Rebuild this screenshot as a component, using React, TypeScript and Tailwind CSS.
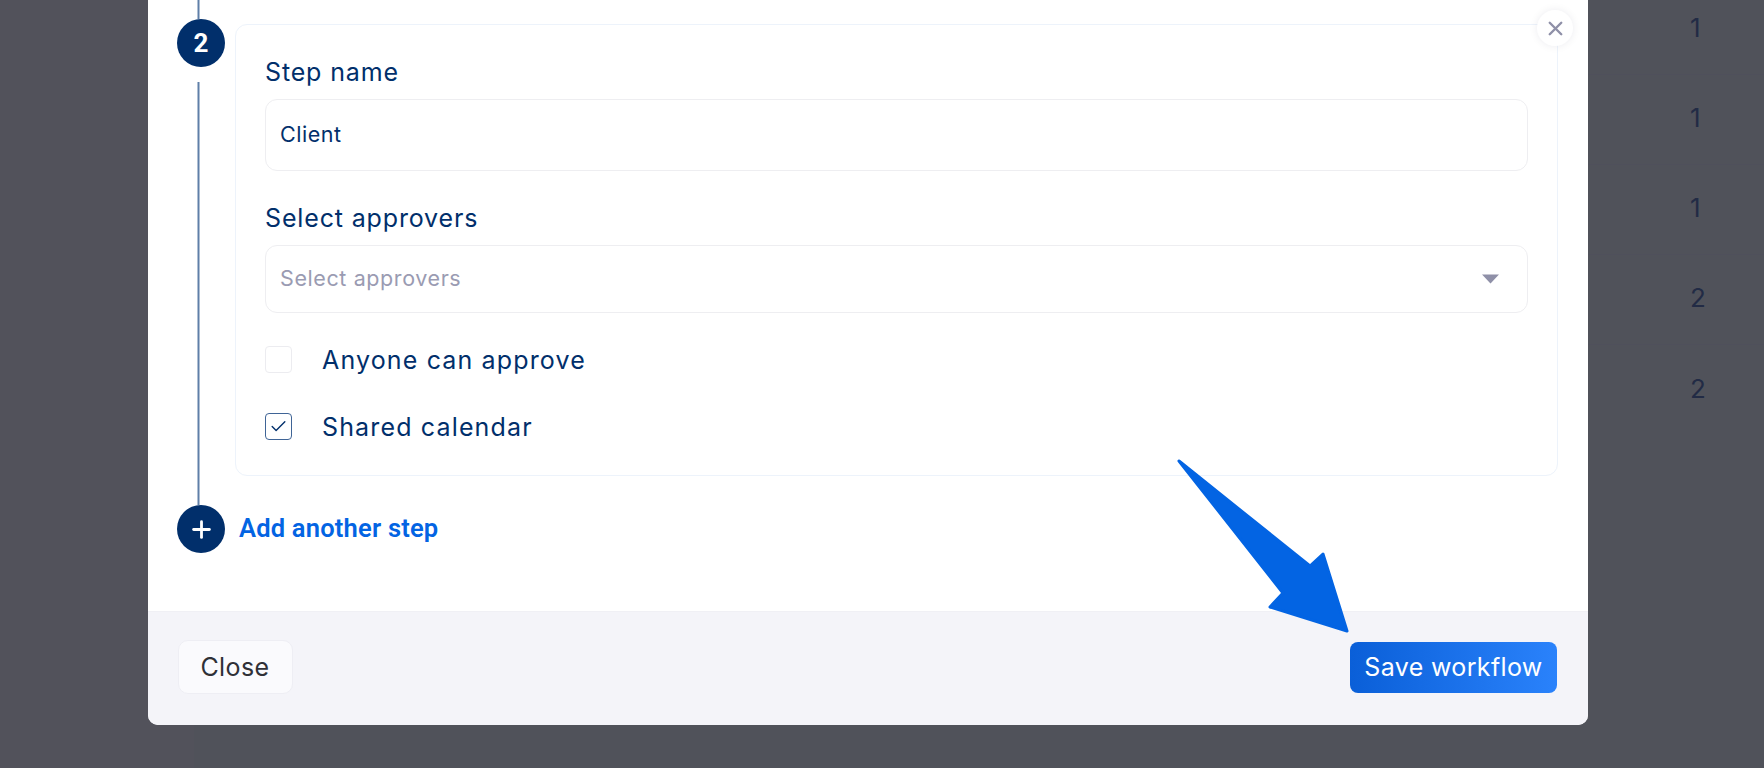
import { Check, Plus, X } from "lucide-react";

/** Row numbers of the table that sits behind the modal. */
function BackdropColumn() {
  return (
    <div className="-mt-[15px] flex w-[176px] shrink-0 flex-col self-start">
      {["1", "1", "1", "2", "2"].map((n, i) => (
        <div
          key={i}
          className="flex h-[90px] items-center border-b border-[#4f505b] pl-[102px] text-[26px] text-[#222b45] last:border-0"
        >
          <span className="-mt-1">{n}</span>
        </div>
      ))}
    </div>
  );
}

function FieldLabel({ children }: { children: string }) {
  return <div className="h-8 text-[25px] leading-8 tracking-[0.85px] text-[#012f6b]">{children}</div>;
}

function CheckRow({ label, checked }: { label: string; checked?: boolean }) {
  return (
    <div className="flex h-[27px] items-center gap-[30px]">
      <span
        className={
          checked
            ? "flex size-[27px] items-center justify-center rounded border border-[#3f6496] text-[#012f6b]"
            : "flex size-[27px] items-center justify-center rounded border border-[#ececf0]"
        }
      >
        {checked && <Check size={19} strokeWidth={1.75} />}
      </span>
      <span className="text-[25px] leading-8 tracking-[1.15px] text-[#012f6b]">{label}</span>
    </div>
  );
}

export default function App() {
  return (
    <div className="relative flex h-[768px] w-[1764px] items-start overflow-hidden bg-[linear-gradient(to_right,#52525b_194px,#50525a_194px)] font-['Inter',sans-serif]">
      <div className="w-[147.5px] shrink-0" />

      <div className="flex h-[724.5px] w-[1440.5px] shrink-0 flex-col overflow-hidden rounded-b-[10px] bg-white">
        <div className="flex flex-1 flex-col pl-[29.5px]">
          <div className="flex h-[505px]">
            <div className="flex w-12 shrink-0 flex-col items-center">
              <div className="h-[19px] w-[1.5px] -translate-x-[2.5px] bg-[#5f7fa8]" />
              <div className="flex size-12 items-center justify-center rounded-full bg-[#012f6b] font-['Roboto',sans-serif] text-[26px] font-bold text-white">
                2
              </div>
              <div className="mt-[15px] w-[1.5px] flex-1 -translate-x-[2.5px] bg-[#5f7fa8]" />
            </div>

            <div className="relative ml-[10px] mt-6 h-[452px] w-[1323px] rounded-xl border border-[#edf3fb] px-[29px] pt-[31px]">
              <button
                type="button"
                className="absolute -right-[16px] -top-[15px] flex size-9 items-center justify-center rounded-full bg-white text-[#8f90a8] shadow-[0_0_8px_rgba(30,30,60,0.08)]"
              >
                <X size={23} strokeWidth={2.5} />
              </button>

              <FieldLabel>Step name</FieldLabel>
              <div className="mt-[11px] flex h-[72px] items-center rounded-xl border border-[#eeeef1] px-[14px] pb-[2px] text-[21.5px] tracking-[0.55px] text-[#012f6b]">
                Client
              </div>

              <div className="mt-[31px]">
                <FieldLabel>Select approvers</FieldLabel>
              </div>
              <div className="mt-[11px] flex h-[68px] items-center justify-between rounded-xl border border-[#eeeef1] px-[14px] text-[21.5px] tracking-[0.6px] text-[#9a9bb2]">
                <span className="-mt-[2px]">Select approvers</span>
                <svg width="17" height="10" viewBox="0 0 17 10" className="mr-[14px]">
                  <path d="M0 0.5H17L8.5 9.5Z" fill="#8f90a8" />
                </svg>
              </div>

              <div className="mt-[33px] flex flex-col gap-10">
                <CheckRow label="Anyone can approve" />
                <CheckRow label="Shared calendar" checked />
              </div>
            </div>
          </div>

          <div className="flex items-center gap-[14px]">
            <div className="flex size-12 items-center justify-center rounded-full bg-[#012f6b] text-white">
              <Plus size={27} strokeWidth={2.5} />
            </div>
            <span className="-mt-[1px] font-['Roboto',sans-serif] text-[25.5px] font-semibold tracking-[0.2px] text-[#0364e3]">
              Add another step
            </span>
          </div>
        </div>

        <div className="flex h-[114px] shrink-0 items-center justify-between border-t border-[#f0f0f5] bg-[#f4f4f9] pb-[2px] pl-[30px] pr-[31px]">
          <button
            type="button"
            className="h-[54px] w-[115px] rounded-[10px] border border-[#eeeef4] bg-[#fafafd] pt-[1px] text-[25px] tracking-[0.4px] text-[#2f3037]"
          >
            Close
          </button>
          <button
            type="button"
            className="h-[51px] w-[207px] rounded-lg bg-[linear-gradient(to_right,#0a5fd8,#2a82fb)] pt-[1px] text-[25px] tracking-[0.35px] text-white"
          >
            Save workflow
          </button>
        </div>
      </div>

      <BackdropColumn />

      {/* annotation arrow pointing at the save button */}
      <svg className="absolute left-0 top-0" width="1764" height="768" viewBox="0 0 1764 768">
        <path
          d="M1179 461L1310 566L1323 554L1347 631L1270 607L1283 593Z"
          fill="#0364e3"
          stroke="#0364e3"
          strokeWidth="3"
          strokeLinejoin="round"
        />
      </svg>
    </div>
  );
}
